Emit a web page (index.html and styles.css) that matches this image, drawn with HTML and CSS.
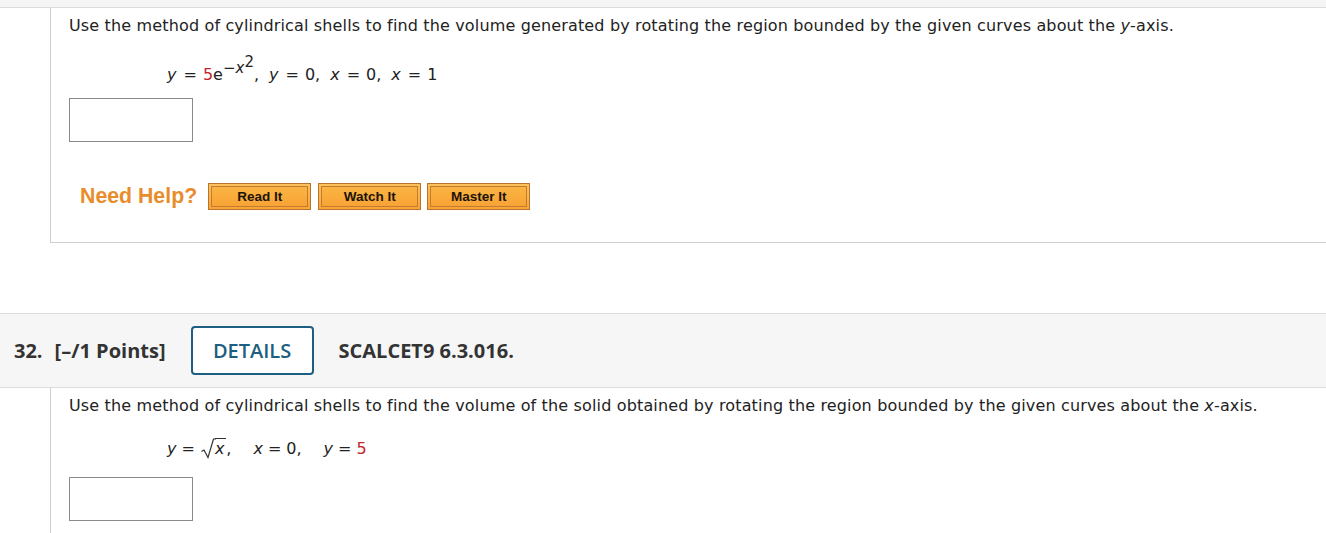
FILE: index.html
```html
<!DOCTYPE html>
<html>
<head>
<meta charset="utf-8">
<link rel="stylesheet" href="styles.css">
</head>
<body>
<div class="topband"></div>
<div class="qbody first">
  <p class="qtext">Use the method of cylindrical shells to find the volume generated by rotating the region bounded by the given curves about the <i>y</i>-axis.</p>
  <div class="eq eq1"><i>y</i><span class="op">=</span><span class="red">5</span>e<sup>&minus;<i>x</i><sup class="sq">2</sup></sup>,<span class="sep1"></span><i>y</i><span class="op">=</span>0,<span class="sep1"></span><i>x</i><span class="op">=</span>0,<span class="sep1"></span><i>x</i><span class="op">=</span>1</div>
  <div class="answer"></div>
  <div class="help">
    <span class="needhelp">Need Help?</span>
    <span class="hbtn"><span class="hin">Read It</span></span>
    <span class="hbtn"><span class="hin">Watch It</span></span>
    <span class="hbtn"><span class="hin">Master It</span></span>
  </div>
</div>
<div class="gap"></div>
<div class="qhead">
  <span class="qnum">32.</span>
  <span class="qpts">[&ndash;/1 Points]</span>
  <span class="details">DETAILS</span>
  <span class="qcode">SCALCET9 6.3.016.</span>
</div>
<div class="qbody second">
  <p class="qtext">Use the method of cylindrical shells to find the volume of the solid obtained by rotating the region bounded by the given curves about the <i>x</i>-axis.</p>
  <div class="eq eq2"><i>y</i><span class="op op2">=</span><span class="rad"><svg class="radsign" width="16" height="21" viewBox="0 0 16 21"><path d="M1.5 13.5 L4 12 L8 19.5 L13.5 1 L16 1" fill="none" stroke="#333" stroke-width="1.2"/></svg><span class="radicand"><i>x</i></span></span>,<span class="sep2"></span><i>x</i><span class="op op2">=</span>0,<span class="sep2"></span><i>y</i><span class="op op2">=</span><span class="red">5</span></div>
  <div class="answer"></div>
</div>
</body>
</html>
```
FILE: styles.css
```css
html, body {
  margin: 0;
  padding: 0;
  background: #fff;
}
body {
  font-family: "DejaVu Sans", Verdana, sans-serif;
  color: #222;
  width: 1326px;
  height: 533px;
  overflow: hidden;
}
.topband {
  height: 7px;
  background: #f5f5f5;
  border-bottom: 1px solid #dcdcdc;
}
.qbody {
  margin-left: 50px;
  border-left: 1px solid #cfcfcf;
  padding-left: 18px;
}
.qbody.first {
  height: 235px;
  border-bottom: 1px solid #cfcfcf;
  box-sizing: border-box;
  padding-top: 8px;
}
.qtext {
  margin: 0;
  font-size: 16px;
  line-height: 20px;
  letter-spacing: 0.15px;
}
.eq {
  font-size: 16px;
  line-height: 20px;
  margin-left: 98px;
  white-space: nowrap;
}
.eq1 {
  margin-top: 26px;
}
.op {
  display: inline-block;
  margin: 0 6px 0 7px;
}
.op2 {
  margin: 0 5px;
}
.sep1 {
  display: inline-block;
  width: 10px;
}
.sep2 {
  display: inline-block;
  width: 22px;
}
.eq sup {
  font-size: 15px;
  vertical-align: 7px;
  line-height: 0;
}
.eq sup .sq {
  font-size: 15px;
  vertical-align: 6px;
}
.red {
  color: #c0272d;
}
.answer {
  width: 124px;
  height: 44px;
  box-sizing: border-box;
  border: 1px solid #8a8a8a;
  background: #fff;
}
.first .answer {
  margin-top: 13px;
}
.help {
  display: flex;
  align-items: center;
  margin-top: 41px;
  margin-left: 11px;
}
.needhelp {
  font-family: "Liberation Sans", Arial, sans-serif;
  font-weight: bold;
  font-size: 21.3px;
  color: #e98d2c;
  margin-right: 11px;
}
.hbtn {
  display: inline-block;
  width: 103px;
  height: 27px;
  box-sizing: border-box;
  border: 1px solid #b8732f;
  background: linear-gradient(#fcc35a, #f9a435);
  padding: 2px;
  margin-right: 7px;
}
.hbtn:nth-child(3) {
  margin-right: 6px;
}
.hbtn:last-child {
  margin-right: 0;
}
.hin {
  display: flex;
  align-items: center;
  justify-content: center;
  height: 100%;
  box-sizing: border-box;
  border: 1px solid #c47a30;
  background: linear-gradient(#fbb443, #f8a335);
  font-family: "Liberation Sans", Arial, sans-serif;
  font-weight: bold;
  font-size: 13.5px;
  color: #1c1408;
}
.gap {
  height: 70px;
}
.qhead {
  height: 73px;
  background: #f6f6f6;
  border-top: 1px solid #dcdcdc;
  border-bottom: 1px solid #dcdcdc;
  display: flex;
  align-items: center;
  font-family: "Open Sans", sans-serif;
  font-weight: bold;
  font-size: 20px;
  color: #333;
  padding-left: 14px;
}
.qnum {
  margin-right: 12px;
}
.details {
  margin-left: 25px;
  width: 123px;
  height: 49px;
  box-sizing: border-box;
  border: 2px solid #1d5f80;
  border-radius: 4px;
  background: #fff;
  color: #1d5f80;
  font-weight: 600;
  display: flex;
  align-items: center;
  justify-content: center;
}
.qcode {
  margin-left: 25px;
}
.qbody.second {
  padding-top: 8px;
  height: 145px;
  box-sizing: border-box;
}
.eq2 {
  margin-top: 22px;
}
.rad {
  display: inline-block;
  white-space: nowrap;
}
.radsign {
  vertical-align: -5px;
}
.radicand {
  display: inline-block;
  border-top: 1.2px solid #333;
  line-height: 17px;
  padding: 1px 2px 0 0;
  margin-left: -1px;
}
.second .answer {
  margin-top: 18px;
}
```
